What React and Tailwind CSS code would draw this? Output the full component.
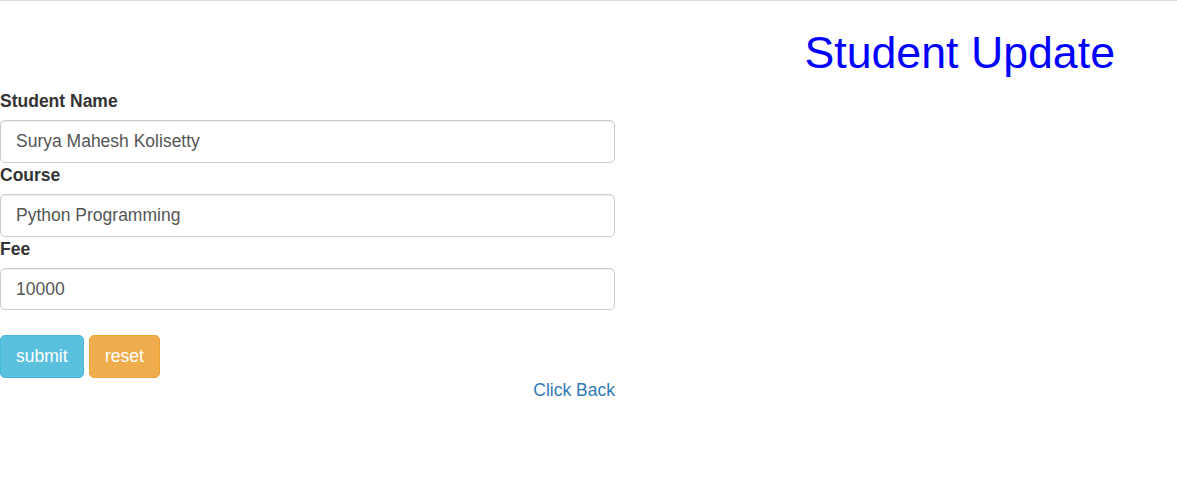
import React from "react";

export default function App() {
  return (
    <div
      className="min-h-[481px] w-full border-t border-[#d9d9d9] bg-white text-[#333]"
      style={{ fontFamily: '"Liberation Sans", Arial, sans-serif' }}
    >
      <div className="flex justify-end pr-[62px] pt-[26.5px]">
        <h1 className="text-[44.7px] leading-[49.5px] font-normal text-[#0000ff]">Student Update</h1>
      </div>
      <form className="mt-[12px] w-[615px]">
        <label className="block text-[17.5px] leading-[25px] font-bold text-[#333] mb-[6.25px]">Student Name</label>
        <input
          className="block w-full h-[42.5px] px-[15px] py-[7.5px] text-[17.5px] leading-[25px] text-[#555] border border-[#ccc] rounded-[5px] shadow-[inset_0_1px_1px_rgba(0,0,0,0.075)] outline-none"
          defaultValue="Surya Mahesh Kolisetty"
        />
        <label className="block text-[17.5px] leading-[25px] font-bold text-[#333] mb-[6.25px]">Course</label>
        <input
          className="block w-full h-[42.5px] px-[15px] py-[7.5px] text-[17.5px] leading-[25px] text-[#555] border border-[#ccc] rounded-[5px] shadow-[inset_0_1px_1px_rgba(0,0,0,0.075)] outline-none"
          defaultValue="Python Programming"
        />
        <label className="block text-[17.5px] leading-[25px] font-bold text-[#333] mb-[6.25px]">Fee</label>
        <input
          className="block w-full h-[42.5px] px-[15px] py-[7.5px] text-[17.5px] leading-[25px] text-[#555] border border-[#ccc] rounded-[5px] shadow-[inset_0_1px_1px_rgba(0,0,0,0.075)] outline-none"
          defaultValue="10000"
        />
        <div className="mt-[25px] flex gap-[5px]">
          <button
            type="button"
            className="h-[42.5px] px-[15px] text-[17.5px] leading-[25px] text-white bg-[#5bc0de] border border-[#46b8da] rounded-[5px]"
          >
            submit
          </button>
          <button
            type="button"
            className="h-[42.5px] px-[15.5px] text-[17.5px] leading-[25px] text-white bg-[#f0ad4e] border border-[#eea236] rounded-[5px]"
          >
            reset
          </button>
        </div>
        <div className="flex justify-end">
          <a href="#" className="text-[17.5px] leading-[25px] text-[#337ab7]">Click Back</a>
        </div>
      </form>
    </div>
  );
}
